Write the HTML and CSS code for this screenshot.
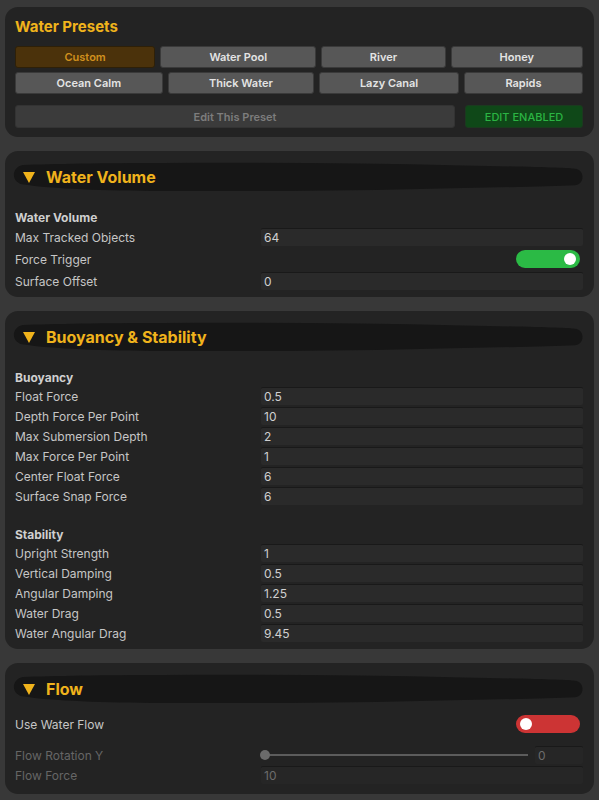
FILE: index.html
```html
<!DOCTYPE html>
<html>
<head>
<meta charset="utf-8">
<link rel="stylesheet" href="styles.css">
</head>
<body>
<div class="page">
  <section class="panel presets">
    <h1 class="title">Water Presets</h1>
    <div class="btn-row">
      <button class="btn active" style="flex-grow:140">Custom</button>
      <button class="btn" style="flex-grow:156">Water Pool</button>
      <button class="btn" style="flex-grow:124">River</button>
      <button class="btn" style="flex-grow:132">Honey</button>
    </div>
    <div class="btn-row">
      <button class="btn" style="flex-grow:148">Ocean Calm</button>
      <button class="btn" style="flex-grow:147">Thick Water</button>
      <button class="btn" style="flex-grow:140">Lazy Canal</button>
      <button class="btn" style="flex-grow:119">Rapids</button>
    </div>
    <div class="btn-row edit-row">
      <button class="btn edit">Edit This Preset</button>
      <button class="btn enabled">EDIT ENABLED</button>
    </div>
  </section>

  <section class="panel">
    <div class="header">
      <svg class="brush" viewBox="0 0 571 30" preserveAspectRatio="none"><path d="M10 3 C40 2 90 1 150 1 C250 0.5 350 1 450 3.5 C520 5 555 6 562 7 C572 8 572 23 562 24 C540 25 500 26 450 27 C350 30 250 30.5 150 30 C90 29.5 40 28 9 23 C-2 21 -2 5 10 3 Z"/></svg>
      <span class="tri"></span><span class="htext">Water Volume</span>
    </div>
    <div class="body body-wv">
      <div class="group-label">Water Volume</div>
      <div class="rows rows-wv">
        <div class="row"><span class="label">Max Tracked Objects</span><span class="field">64</span></div>
        <div class="row"><span class="label">Force Trigger</span><span class="toggle-cell"><span class="toggle on"><span class="knob"></span></span></span></div>
        <div class="row"><span class="label">Surface Offset</span><span class="field">0</span></div>
      </div>
    </div>
  </section>

  <section class="panel">
    <div class="header">
      <svg class="brush" viewBox="0 0 571 30" preserveAspectRatio="none"><path d="M10 3 C40 2 90 1 150 1 C250 0.5 350 1 450 3.5 C520 5 555 6 562 7 C572 8 572 23 562 24 C540 25 500 26 450 27 C350 30 250 30.5 150 30 C90 29.5 40 28 9 23 C-2 21 -2 5 10 3 Z"/></svg>
      <span class="tri"></span><span class="htext">Buoyancy &amp; Stability</span>
    </div>
    <div class="body body-bs">
      <div class="group-label">Buoyancy</div>
      <div class="rows">
        <div class="row"><span class="label">Float Force</span><span class="field">0.5</span></div>
        <div class="row"><span class="label">Depth Force Per Point</span><span class="field">10</span></div>
        <div class="row"><span class="label">Max Submersion Depth</span><span class="field">2</span></div>
        <div class="row"><span class="label">Max Force Per Point</span><span class="field">1</span></div>
        <div class="row"><span class="label">Center Float Force</span><span class="field">6</span></div>
        <div class="row"><span class="label">Surface Snap Force</span><span class="field">6</span></div>
      </div>
      <div class="group-label stability">Stability</div>
      <div class="rows">
        <div class="row"><span class="label">Upright Strength</span><span class="field">1</span></div>
        <div class="row"><span class="label">Vertical Damping</span><span class="field">0.5</span></div>
        <div class="row"><span class="label">Angular Damping</span><span class="field">1.25</span></div>
        <div class="row"><span class="label">Water Drag</span><span class="field">0.5</span></div>
        <div class="row"><span class="label">Water Angular Drag</span><span class="field">9.45</span></div>
      </div>
    </div>
  </section>

  <section class="panel flow-panel">
    <div class="header">
      <svg class="brush" viewBox="0 0 571 30" preserveAspectRatio="none"><path d="M10 3 C40 2 90 1 150 1 C250 0.5 350 1 450 3.5 C520 5 555 6 562 7 C572 8 572 23 562 24 C540 25 500 26 450 27 C350 30 250 30.5 150 30 C90 29.5 40 28 9 23 C-2 21 -2 5 10 3 Z"/></svg>
      <span class="tri"></span><span class="htext">Flow</span>
    </div>
    <div class="body body-flow">
      <div class="row"><span class="label">Use Water Flow</span><span class="toggle-cell"><span class="toggle off"><span class="knob"></span></span></span></div>
      <div class="rows flow-rows">
        <div class="row dim"><span class="label">Flow Rotation Y</span>
          <span class="slider-cell"><span class="slider"><span class="track"></span><span class="sknob"></span></span><span class="field small">0</span></span>
        </div>
        <div class="row dim"><span class="label">Flow Force</span><span class="field">10</span></div>
      </div>
    </div>
  </section>
</div>
</body>
</html>
```

FILE: styles.css
```css
* { box-sizing: border-box; }
html, body { margin: 0; padding: 0; background: #383838; }
body {
  font-family: Inter, "Noto Sans", "Liberation Sans", sans-serif;
  color: #c4c4c4;
  width: 599px;
  height: 800px;
  overflow: hidden;
}
.page {
  padding: 7px 5px 0 5px;
  display: flex;
  flex-direction: column;
  gap: 14px;
}
.panel {
  background: #232323;
  border-radius: 13px;
  width: 589px;
  padding: 11px 11px 7px 10px;
}
.presets { padding: 9px 11px 9px 10px; }
.flow-panel { padding-bottom: 10px; }
.title {
  margin: 0 0 8px 0;
  font-size: 15px;
  line-height: 22px;
  font-weight: 700;
  color: #f0b31c;
}
.btn-row {
  display: flex;
  gap: 5px;
  margin-bottom: 4px;
}
.edit-row { margin-top: 11px; margin-bottom: 0; gap: 10px; }
.btn {
  flex-basis: 0;
  height: 22px;
  border: 1px solid #3a3a3a;
  border-radius: 3px;
  background: #575757;
  color: #e4e4e4;
  font-family: inherit;
  font-size: 11px;
  font-weight: 600;
  padding: 0;
}
.btn.active {
  background: #4b320b;
  color: #d0901e;
  border-color: #2e2008;
}
.btn.edit {
  flex: 0 0 440px;
  height: 23px;
  background: #3b3b3b;
  border-color: #333;
  color: #7d7d7d;
}
.btn.enabled {
  flex: 1 1 0;
  height: 23px;
  background: #0f4818;
  border-color: #1b3a1f;
  color: #2bb443;
  font-weight: 500;
}
.header {
  position: relative;
  margin: 0 0 0 -2px;
  width: 571px;
  height: 29px;
  display: flex;
  align-items: center;
  padding-left: 10px;
}
.brush {
  position: absolute;
  left: 0; top: 0;
  width: 100%;
  height: 100%;
  fill: #161616;
}
.tri {
  position: relative;
  width: 0; height: 0;
  border-left: 6px solid transparent;
  border-right: 6px solid transparent;
  border-top: 11px solid #f0b31c;
  margin-right: 11px;
  margin-top: 1px;
}
.htext {
  position: relative;
  font-size: 16px;
  font-weight: 700;
  color: #f0b31c;
}
.body { display: flex; flex-direction: column; }
.body-wv { padding-top: 19px; }
.body-bs { padding-top: 19px; }
.body-flow { padding-top: 12px; }
.group-label {
  font-size: 12px;
  font-weight: 700;
  line-height: 16px;
  color: #cfcfcf;
  margin-bottom: 1px;
}
.group-label.stability { margin-top: 22px; }
.rows { display: flex; flex-direction: column; gap: 2px; }
.rows-wv { gap: 4px; margin-top: 1px; }
.flow-rows { margin-top: 13px; }
.row {
  display: flex;
  align-items: center;
  height: 18px;
  font-size: 12px;
}
.label { width: 246px; flex: none; color: #c6c6c6; }
.field {
  flex: 1;
  height: 18px;
  background: #2a2a2a;
  border-top: 1px solid #191919;
  border-radius: 2px;
  padding-left: 3px;
  line-height: 17px;
  color: #d0d0d0;
}
.toggle-cell { flex: 1; display: flex; justify-content: flex-end; padding-right: 3px; }
.toggle {
  width: 64px;
  height: 18px;
  border-radius: 9px;
  display: flex;
  align-items: center;
  padding: 0 4px;
}
.toggle.on { background: #2bba45; justify-content: flex-end; }
.toggle.off { background: #cc3434; justify-content: flex-start; }
.knob { width: 12px; height: 12px; border-radius: 50%; background: #fff; }
.dim .label { color: #666; }
.dim .field { background: #262626; color: #6c6c6c; }
.slider-cell { flex: 1; display: flex; align-items: center; gap: 7px; }
.slider { position: relative; flex: 1; height: 18px; display: flex; align-items: center; }
.track { flex: 1; height: 2px; background: #5c5c5c; margin-left: 4px; }
.sknob {
  position: absolute;
  left: -1px;
  top: 4px;
  width: 10px; height: 10px;
  border-radius: 50%;
  background: #6b6b6b;
}
.field.small { flex: none; width: 48px; }
```
